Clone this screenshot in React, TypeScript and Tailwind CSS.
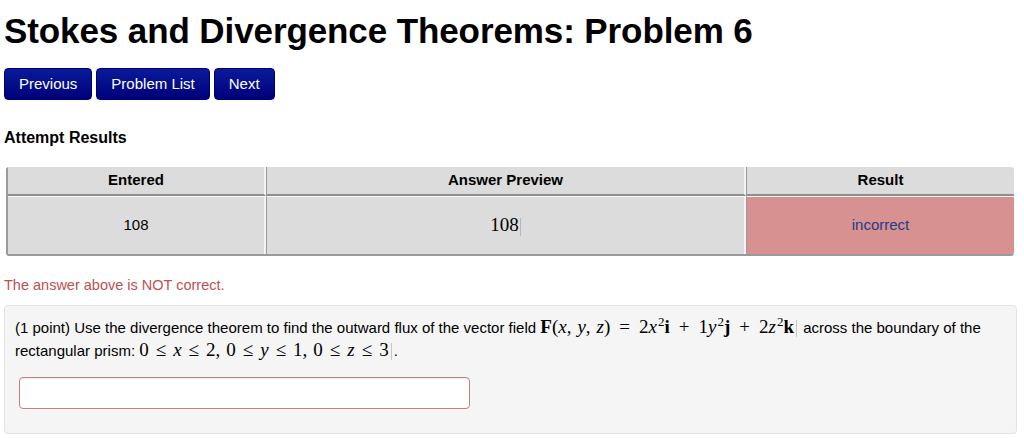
const sans = { fontFamily: '"Liberation Sans", Arial, sans-serif' };

const serif = "font-['Liberation_Serif','DejaVu_Serif',serif] text-[19px]";

const M = ({ children }: { children: React.ReactNode }) => <span className={`${serif} italic`}>{children}</span>;
const R = ({ children }: { children: React.ReactNode }) => <span className={serif}>{children}</span>;
const B = ({ children }: { children: React.ReactNode }) => <span className={`${serif} font-bold`}>{children}</span>;
const Op = ({ children }: { children: React.ReactNode }) => (
    <span className={`${serif} mx-[7px]`}>{children}</span>
);
const Bin = ({ children }: { children: React.ReactNode }) => (
    <span className={`${serif} mx-[9px]`}>{children}</span>
);
const Comma = () => <span className={`${serif} mr-[6px]`}>,</span>;
const Sup = ({ children }: { children: React.ReactNode }) => (
    <sup className="ml-[1px] font-['Liberation_Serif','DejaVu_Serif',serif] text-[13px]">{children}</sup>
);
const Caret = () => <span className="mx-[2px] inline-block h-[17px] w-px align-middle bg-[#c8c8c8]" />;

const NavButton = ({ label }: { label: string }) => (
    <button className="h-8 rounded-[4px] border border-[#00006a] bg-gradient-to-b from-[#0a1a9a] to-[#00007a] px-[14px] text-[15px] text-white">
        {label}
    </button>
);

export default function App() {
    return (
        <div className="min-h-screen bg-white px-1 text-black" style={sans}>
            <h1 className="pt-[10px] text-[35px] font-bold leading-[42px] tracking-[-0.1px]">
                Stokes and Divergence Theorems: Problem 6
            </h1>

            <div className="mt-[16px] flex gap-1">
                <NavButton label="Previous" />
                <NavButton label="Problem List" />
                <NavButton label="Next" />
            </div>

            <h2 className="mt-[28px] text-[16px] font-bold leading-5">Attempt Results</h2>

            <div className="ml-[2px] mr-[6px] mt-[19px] overflow-hidden rounded-[3px] border-b-2 border-l-2 border-[#9a9a9a]">
                <table className="w-full border-separate border-spacing-0 text-[15px]">
                    <thead>
                        <tr className="h-[29px] bg-[#dcdcdc]">
                            <th className="w-[258px] border-b-2 border-r-2 border-b-[#8f8f8f] border-r-[#f4f4f4] font-bold">Entered</th>
                            <th className="w-[480px] border-b-2 border-r-2 border-b-[#8f8f8f] border-r-[#f4f4f4] border-l border-l-[#9a9a9a] font-bold">
                                Answer Preview
                            </th>
                            <th className="border-b-2 border-b-[#8f8f8f] border-l border-l-[#9a9a9a] font-bold">Result</th>
                        </tr>
                    </thead>
                    <tbody>
                        <tr className="h-[58px]">
                            <td className="border-r-2 border-t border-r-[#f4f4f4] border-t-[#f4f4f4] bg-[#dcdcdc] text-center">108</td>
                            <td className="border-l border-r-2 border-t border-l-[#9a9a9a] border-r-[#f4f4f4] border-t-[#f4f4f4] bg-[#dcdcdc] text-center">
                                <span className="font-['Liberation_Serif','DejaVu_Serif',serif] text-[19px]">108</span>
                                <span className="ml-[1px] inline-block h-[18px] w-px align-middle bg-[#b8b8b8]" />
                            </td>
                            <td className="border-l border-t border-l-[#9a9a9a] border-t-[#f4f4f4] bg-[#d69190] text-center text-[#263a8a]">
                                incorrect
                            </td>
                        </tr>
                    </tbody>
                </table>
            </div>

            <p className="mt-[19px] text-[14.5px] text-[#c0504f]">The answer above is NOT correct.</p>

            <div className="mr-[3px] mt-[8px] h-[129px] rounded-[4px] border border-[#e3e3e3] bg-[#f5f5f5] px-[10px] pt-[10px]">
                <p className="text-[15px] leading-[22px]">
                    (1 point) Use the divergence theorem to find the outward flux of the vector field <B>F</B>
                    <R>(</R>
                    <M>x</M>
                    <Comma />
                    <M>y</M>
                    <Comma />
                    <M>z</M>
                    <R>)</R>
                    <Bin>=</Bin>
                    <R>2</R>
                    <M>x</M>
                    <Sup>2</Sup>
                    <B>i</B>
                    <Bin>+</Bin>
                    <R>1</R>
                    <M>y</M>
                    <Sup>2</Sup>
                    <B>j</B>
                    <Bin>+</Bin>
                    <R>2</R>
                    <M>z</M>
                    <Sup>2</Sup>
                    <B>k</B>
                    <Caret /> across the boundary of the rectangular prism: <R>0</R>
                    <Op>≤</Op>
                    <M>x</M>
                    <Op>≤</Op>
                    <R>2</R>
                    <Comma />
                    <R>0</R>
                    <Op>≤</Op>
                    <M>y</M>
                    <Op>≤</Op>
                    <R>1</R>
                    <Comma />
                    <R>0</R>
                    <Op>≤</Op>
                    <M>z</M>
                    <Op>≤</Op>
                    <R>3</R>
                    <Caret />.
                </p>
                <div className="ml-[4px] mt-[15px] h-[32px] w-[451px] rounded-[4px] border border-[#c87f7f] bg-white shadow-[inset_0_1px_1px_rgba(0,0,0,0.075)]" />
            </div>
        </div>
    );
}
